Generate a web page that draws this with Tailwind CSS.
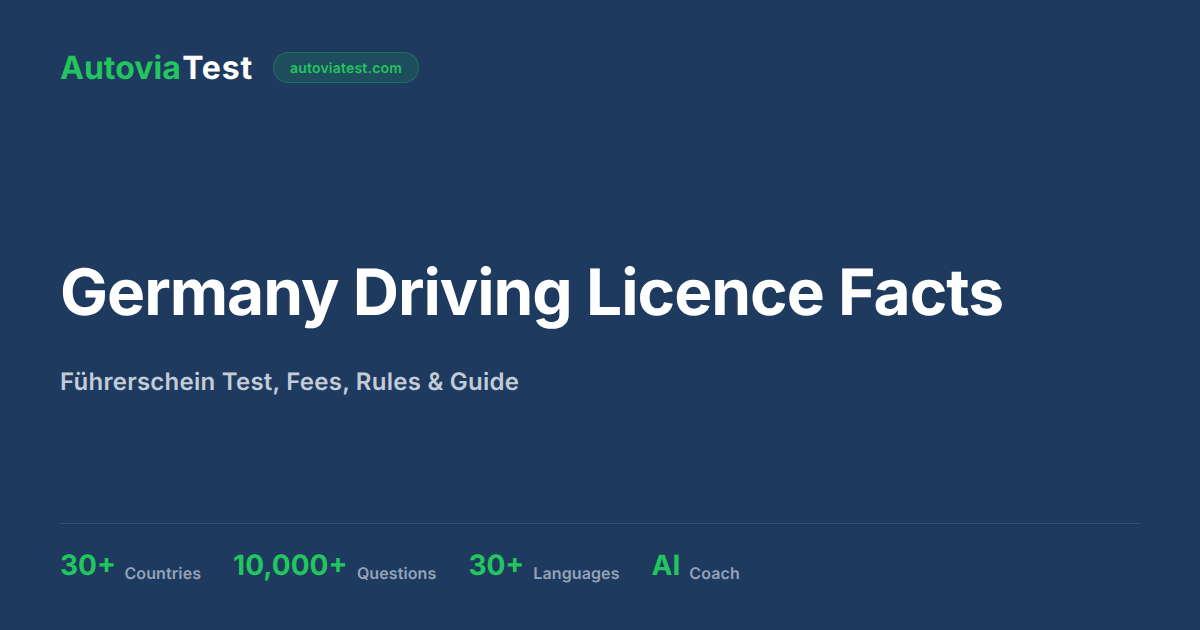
<!doctype html>
<html><head><meta charset="utf-8"><script src="https://cdn.jsdelivr.net/npm/@tailwindcss/browser@4"></script></head>
<body class="m-0">
<div class="w-[1200px] h-[630px] bg-[#1e3a5f] flex flex-col px-[60px] pt-[48px] pb-[48px] font-['Inter',sans-serif] [text-rendering:geometricPrecision] overflow-hidden">
  <div class="flex items-center gap-[20px]">
    <div class="text-[32px] leading-[39px] font-bold text-white"><span class="text-[#22c55e]">Autovia</span><span class="ml-[1.5px] tracking-[0.8px]">Test</span></div>
    <div class="text-[14px] leading-[17px] font-semibold text-[#22c55e] bg-[#22c55e]/15 border border-[#22c55e]/30 rounded-[20px] px-[16px] pt-[7px] pb-[5px] tracking-[0.2px]">autoviatest.com</div>
  </div>
  <div class="flex flex-col mt-[171px]">
    <div class="text-[64px] leading-[70px] font-bold text-white tracking-[-1px]">Germany Driving Licence Facts</div>
    <div class="mt-[39px] text-[24px] leading-[29px] font-semibold text-[#c2ccd9] tracking-[0.25px]">Führerschein Test, Fees, Rules &amp; Guide</div>
  </div>
  <div class="mt-auto flex items-end gap-[32px] border-t border-[#2a5570] pt-[24px]">
    <div class="flex items-end gap-[8.5px]"><span class="text-[28px] leading-[34px] font-bold text-[#22c55e]">30+</span><span class="text-[16px] leading-[19px] translate-y-[1px] font-semibold text-[#94a3b8] tracking-[0.1px]">Countries</span></div>
    <div class="flex items-end gap-[9.5px]"><span class="text-[28px] leading-[34px] font-bold text-[#22c55e]">10,000+</span><span class="text-[16px] leading-[19px] translate-y-[1px] font-semibold text-[#94a3b8] tracking-[0.1px]">Questions</span></div>
    <div class="flex items-end gap-[9px]"><span class="text-[28px] leading-[34px] font-bold text-[#22c55e]">30+</span><span class="text-[16px] leading-[19px] translate-y-[1px] font-semibold text-[#94a3b8] tracking-[0.1px]">Languages</span></div>
    <div class="flex items-end gap-[9px]"><span class="text-[28px] leading-[34px] font-bold text-[#22c55e]">AI</span><span class="text-[16px] leading-[19px] translate-y-[1px] font-semibold text-[#94a3b8] tracking-[0.1px]">Coach</span></div>
  </div>
</div>
</body></html>
